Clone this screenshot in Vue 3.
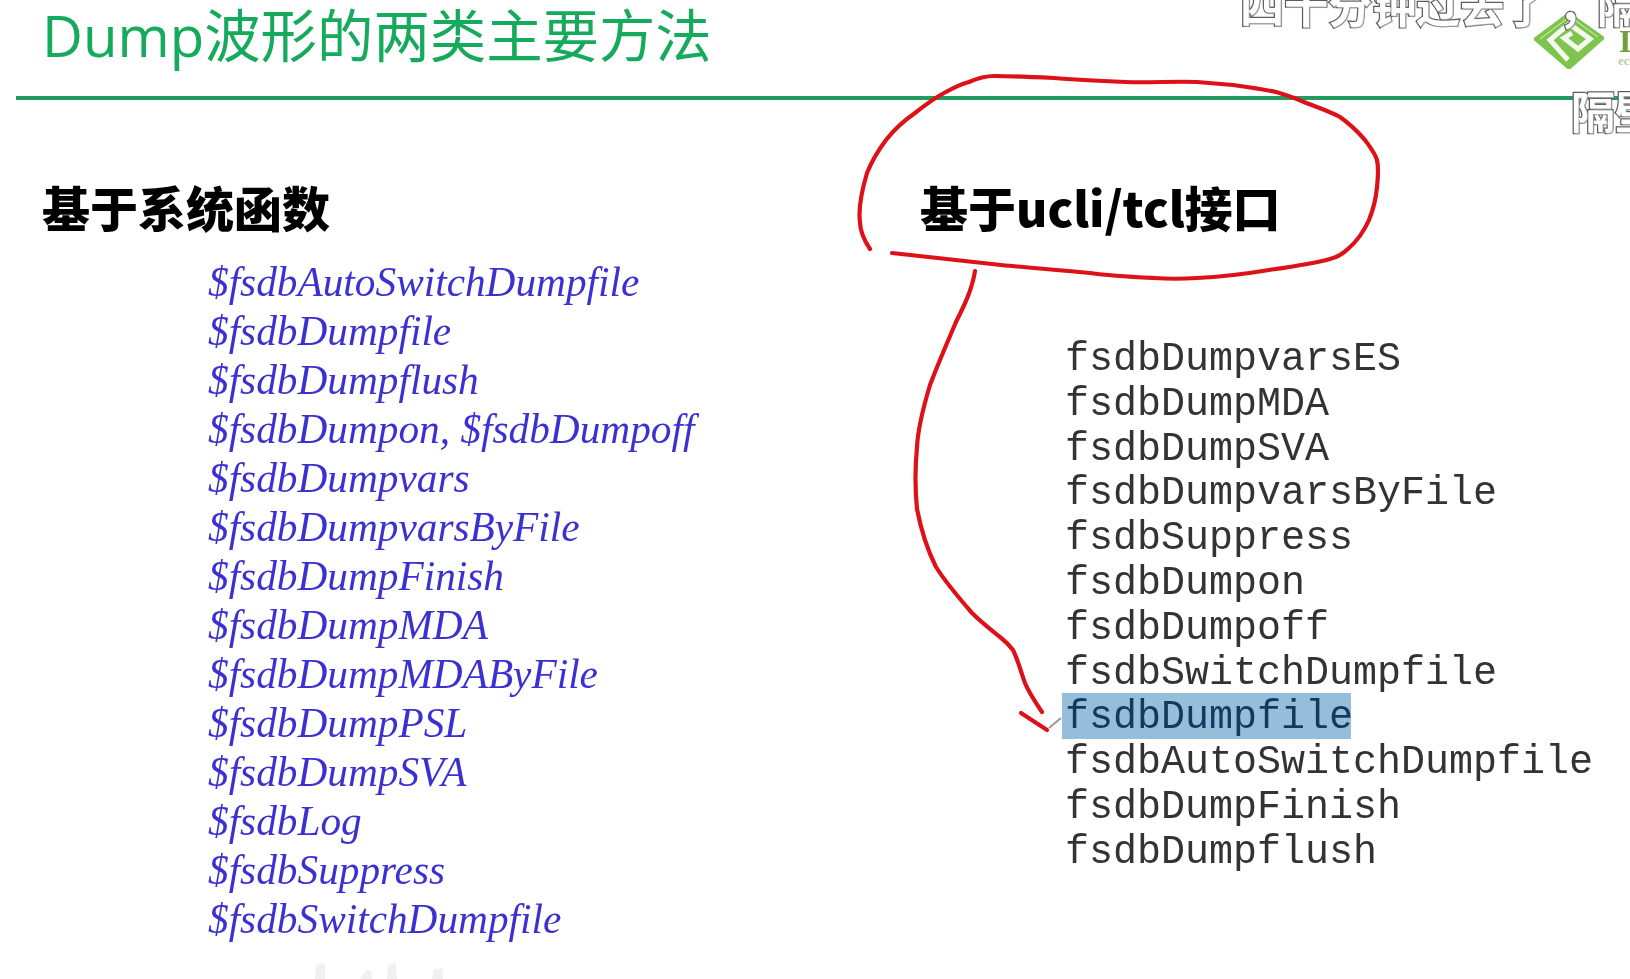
<script setup>
const sysFuncs = ['$fsdbAutoSwitchDumpfile','$fsdbDumpfile','$fsdbDumpflush','$fsdbDumpon, $fsdbDumpoff','$fsdbDumpvars','$fsdbDumpvarsByFile','$fsdbDumpFinish','$fsdbDumpMDA','$fsdbDumpMDAByFile','$fsdbDumpPSL','$fsdbDumpSVA','$fsdbLog','$fsdbSuppress','$fsdbSwitchDumpfile']
const tclCmds = ['fsdbDumpvarsES','fsdbDumpMDA','fsdbDumpSVA','fsdbDumpvarsByFile','fsdbSuppress','fsdbDumpon','fsdbDumpoff','fsdbSwitchDumpfile','fsdbDumpfile','fsdbAutoSwitchDumpfile','fsdbDumpFinish','fsdbDumpflush']
const selected = 'fsdbDumpfile'
</script>

<template>
  <div class="slide">
    <header class="head">
      <h1 class="title">Dump波形的两类主要方法</h1>
    </header>
    <main class="cols">
      <section class="col col-left">
        <h2 class="sub">基于系统函数</h2>
        <ul class="funcs">
          <li v-for="f in sysFuncs" :key="f">{{ f }}</li>
        </ul>
      </section>
      <section class="col col-right">
        <h2 class="sub">基于ucli/tcl接口</h2>
        <ul class="cmds">
          <li v-for="c in tclCmds" :key="c"><span :class="{ sel: c === selected }">{{ c }}</span></li>
        </ul>
      </section>
    </main>

    <svg class="ink" width="1630" height="979" viewBox="0 0 1630 979" fill="none">
      <path class="red" d="M870 249 C864 240 860 232 860 222 C858 208 862 190 867 173 C873 158 880 148 886 140 C896 127 905 120 915 113 C925 105 935 98 944 93 C953 88 961 84 969 82 C978 78 986 76 994 76 C1014 76 1034 77 1054 78 C1078 80 1102 81 1126 82 C1150 83 1174 81 1197 82 C1210 83 1222 84 1233 85 C1248 87 1262 89 1276 92 C1286 95 1295 98 1304 102 C1316 107 1329 111 1340 117 C1350 124 1358 132 1365 140 C1370 147 1375 153 1377 160 C1379 169 1378 178 1377 187 C1376 199 1373 210 1369 220 C1364 231 1357 241 1349 248 C1344 253 1338 257 1330 259 C1312 264 1290 267 1269 270 C1245 274 1221 277 1197 278 C1183 279 1168 279 1154 278 C1133 277 1111 276 1090 273 C1060 270 1031 268 1001 265 C965 261 928 257 892 253" />
      <path class="red" d="M975 271 C972 290 964 306 956 322 C947 343 938 364 930 385 C924 405 918 426 917 447 C915 468 915 489 917 509 C921 530 927 549 936 567 C946 583 959 598 972 613 C981 622 990 629 1000 637 C1005 641 1010 646 1013 650 C1018 660 1021 672 1025 683 C1029 693 1036 703 1042 712" />
      <path class="red" d="M1021 713 L1047 730" />
      <path class="pen" d="M1049 728 L1061 718" />
      <g class="ghost">
        <path d="M315 979 L316 966 L321 963 L325 964 L325 979 Z" />
        <path d="M360 979 L367 969 L372 972 L372 979 Z" />
        <path d="M387 979 L388 965 L396 963 L397 979 Z" />
        <path d="M432 979 L434 970 L442 968 L443 979 Z" />
      </g>
    </svg>

    <svg class="logo" width="70" height="56" viewBox="0 0 70 56">
      <path d="M35 0 L70 25 L35 56 L0 26 Z" fill="#7fc44c" stroke="#7fc44c" stroke-linejoin="round" stroke-width="2" />
      <path d="M34 47 L16 27 L35 11 L56 26 L44 36 L30 25 L38 20" fill="none" stroke="#f4faee" stroke-width="5" stroke-linejoin="miter" />
      <path d="M6 26 L35 4 M42 8 L64 24" fill="none" stroke="#dff0d0" stroke-width="1" />
    </svg>
    <div class="brand brand-big">I</div>
    <div class="brand brand-small">ec</div>

    <div class="sub-line sub-top">四十分钟过去了<span class="comma">，</span>隔</div>
    <div class="sub-line sub-mid">隔壁</div>
  </div>
</template>

<style scoped>
.slide {
  position: relative;
  width: 1630px;
  height: 979px;
  overflow: hidden;
  background: #fff;
  display: flex;
  flex-direction: column;
  filter: blur(0.45px);
}
.head {
  margin-left: 16px;
  height: 96px;
  padding-left: 26px;
  border-bottom: 4px solid #219c60;
  flex: none;
}
.title {
  margin: 0;
  font: 400 56.4px/71px "Open Sans", "Noto Sans CJK SC", sans-serif;
  color: #16aa5c;
  white-space: nowrap;
}
.cols {
  display: flex;
  padding-top: 76px;
}
.col-left {
  width: 920px;
  padding-left: 42px;
  box-sizing: border-box;
  flex: none;
}
.col-right {
  flex: 1;
  min-width: 0;
}
.sub {
  margin: 0;
  height: 60px;
  font: 900 48px/60px "Noto Sans CJK SC", sans-serif;
  color: #000;
  white-space: nowrap;
}
.funcs, .cmds {
  list-style: none;
  margin: 0;
  white-space: nowrap;
}
.funcs {
  margin-top: 22px;
  padding: 0 0 0 166px;
  font: italic 400 41.3px/49px "Liberation Serif", serif;
  color: #3b30d2;
}
.cmds {
  margin-top: 102px;
  padding: 0 0 0 145px;
  font: 400 40px/44.8px "Liberation Mono", monospace;
  color: #333;
}
.sel {
  position: relative;
  z-index: 0;
  display: inline-block;
  color: #123a5e;
}
.sel::before {
  content: "";
  position: absolute;
  inset: -3px 2px 2px -3px;
  background: #96bedb;
  z-index: -1;
}
.ink {
  position: absolute;
  left: 0;
  top: 0;
  pointer-events: none;
}
.red {
  stroke: #dd1118;
  stroke-width: 4.2;
  stroke-linecap: round;
  stroke-linejoin: round;
}
.pen {
  stroke: #999;
  stroke-width: 2;
}
.ghost path {
  fill: #f1f1f1;
}
.sub-line {
  position: absolute;
  font: 700 44px/52px "Noto Sans CJK SC", sans-serif;
  color: #fff;
  -webkit-text-stroke: 2.5px #5c5c5c;
  paint-order: stroke fill;
  text-shadow: 1px 1px 1px #aaa;
  white-space: nowrap;
}
.comma {
  margin-left: 10px;
  margin-right: -5px;
}
.sub-top {
  left: 1240px;
  top: -22px;
}
.sub-mid {
  left: 1571px;
  top: 84px;
}
.logo {
  position: absolute;
  left: 1534px;
  top: 13px;
}
.brand {
  position: absolute;
  font-family: "Liberation Serif", serif;
  font-weight: 700;
  color: #6d9f3c;
  line-height: 1;
}
.brand-big {
  left: 1619px;
  top: 25px;
  font-size: 32px;
}
.brand-small {
  left: 1618px;
  top: 54px;
  font-size: 13px;
  color: #b5d098;
}
</style>
